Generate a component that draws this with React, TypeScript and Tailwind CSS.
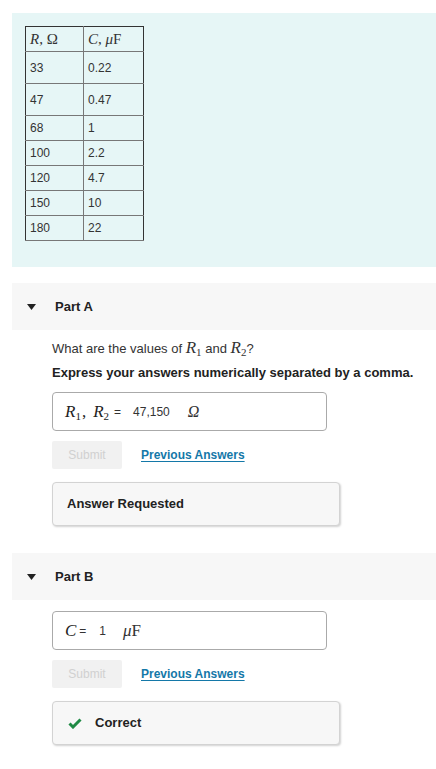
const rows = [
  { r: "33", c: "0.22", tall: true },
  { r: "47", c: "0.47", tall: true },
  { r: "68", c: "1" },
  { r: "100", c: "2.2" },
  { r: "120", c: "4.7" },
  { r: "150", c: "10" },
  { r: "180", c: "22" },
];

const math = "font-['Liberation_Serif','DejaVu_Serif',serif]";

function Caret() {
  return (
    <svg width="9" height="6" viewBox="0 0 9 6" className="shrink-0">
      <path d="M0 0 L9 0 L4.5 6 Z" fill="#222" />
    </svg>
  );
}

// subscript that does not grow the line box
function Sub({ n }: { n: string }) {
  return <span className="relative top-[3px] not-italic text-[11px] leading-none">{n}</span>;
}

function PartHeader({ label }: { label: string }) {
  return (
    <div className="flex items-center h-[47px] bg-[#f7f7f7] pl-[15px]">
      <Caret />
      <span className="ml-[19px] text-[13px] font-bold text-[#222]">{label}</span>
    </div>
  );
}

function SubmitRow() {
  return (
    <div className="flex items-center mt-[10px]">
      <div className="w-[70px] h-[28px] bg-[#f1f1f1] rounded-[2px] flex items-center justify-center text-[12px] text-[#d0d0d0]">
        Submit
      </div>
      <a className="ml-[19px] text-[12px] font-bold text-[#1478a8] underline underline-offset-2">
        Previous Answers
      </a>
    </div>
  );
}

function Feedback({ children }: { children: React.ReactNode }) {
  return (
    <div className="mt-[13px] w-[288px] h-[44px] bg-[#f7f7f7] border border-[#d3d3d3] rounded-[4px] shadow-[1px_1px_2px_rgba(0,0,0,0.18)] flex items-center px-[14px] text-[13px] font-bold text-[#222]">
      {children}
    </div>
  );
}

export default function App() {
  return (
    <div className="bg-white min-h-[769px] pt-[13px] pl-[12px] font-['Liberation_Sans',Arial,sans-serif] text-[#333]">
      {/* table panel */}
      <div className="bg-[#e6f6f6] h-[254px] pt-[13px] pl-[13px]">
        <table className="border border-[#333] border-collapse text-[12px] text-[#333]">
          <thead>
            <tr className="h-[25px]">
              <th className={`w-[58px] border border-[#777] border-l-[#333] border-t-[#333] text-left font-normal pl-[4px] text-[15px] ${math}`}>
                <i>R</i>, Ω
              </th>
              <th className={`w-[60px] border border-[#777] border-r-[#333] border-t-[#333] text-left font-normal pl-[4px] text-[15px] ${math}`}>
                <i>C</i>, <i>μ</i>F
              </th>
            </tr>
          </thead>
          <tbody>
            {rows.map((row) => (
              <tr key={row.r} className={row.tall ? "h-[32px]" : "h-[25px]"}>
                <td className="border border-[#777] border-l-[#333] pl-[4px]">{row.r}</td>
                <td className="border border-[#777] border-r-[#333] pl-[4px]">{row.c}</td>
              </tr>
            ))}
          </tbody>
        </table>
      </div>

      {/* Part A */}
      <div className="mt-[16px]">
        <PartHeader label="Part A" />
        <div className="pl-[40px] pt-[9px]">
          <p className="text-[13px] text-[#333] leading-[18px]">
            What are the values of{" "}
            <span className={`${math} italic text-[17px] leading-none`}>
              R<Sub n="1" />
            </span>{" "}
            and{" "}
            <span className={`${math} italic text-[17px] leading-none`}>
              R<Sub n="2" />
            </span>
            ?
          </p>
          <p className="mt-[6px] text-[13px] leading-[18px] font-bold text-[#222]">
            Express your answers numerically separated by a comma.
          </p>
          <div className="mt-[10px] w-[275px] h-[39px] border border-[#aaa] rounded-[4px] flex items-center pl-[12px] text-[12px]">
            <span className={`${math} italic text-[17px] leading-none text-[#222]`}>
              R<Sub n="1" />
              <span className="not-italic ml-[1px]">,</span>
              <span className="ml-[7px]">R</span>
              <Sub n="2" />
            </span>
            <span className="ml-[5px] text-[#333]">=</span>
            <span className="ml-[12px] text-[#333]">47,150</span>
            <span className={`ml-[18px] ${math} italic text-[16px] text-[#333]`}>Ω</span>
          </div>
          <SubmitRow />
          <Feedback>Answer Requested</Feedback>
        </div>
      </div>

      {/* Part B */}
      <div className="mt-[27px]">
        <PartHeader label="Part B" />
        <div className="pl-[40px] pt-[11px]">
          <div className="w-[275px] h-[39px] border border-[#aaa] rounded-[4px] flex items-center pl-[12px] text-[12px]">
            <span className={`${math} italic text-[17px] leading-none text-[#222]`}>C</span>
            <span className="ml-[3px] text-[#333]">=</span>
            <span className="ml-[13px] text-[#333]">1</span>
            <span className={`ml-[17px] ${math} text-[17px] text-[#333]`}>
              <i>μ</i>F
            </span>
          </div>
          <SubmitRow />
          <Feedback>
            <svg width="14" height="11" viewBox="0 0 14 11" className="ml-[1px] mr-[13px]">
              <path d="M1.5 5.5 L5 9 L12.5 1.5" fill="none" stroke="#1f8a45" strokeWidth="3" />
            </svg>
            Correct
          </Feedback>
        </div>
      </div>
    </div>
  );
}
